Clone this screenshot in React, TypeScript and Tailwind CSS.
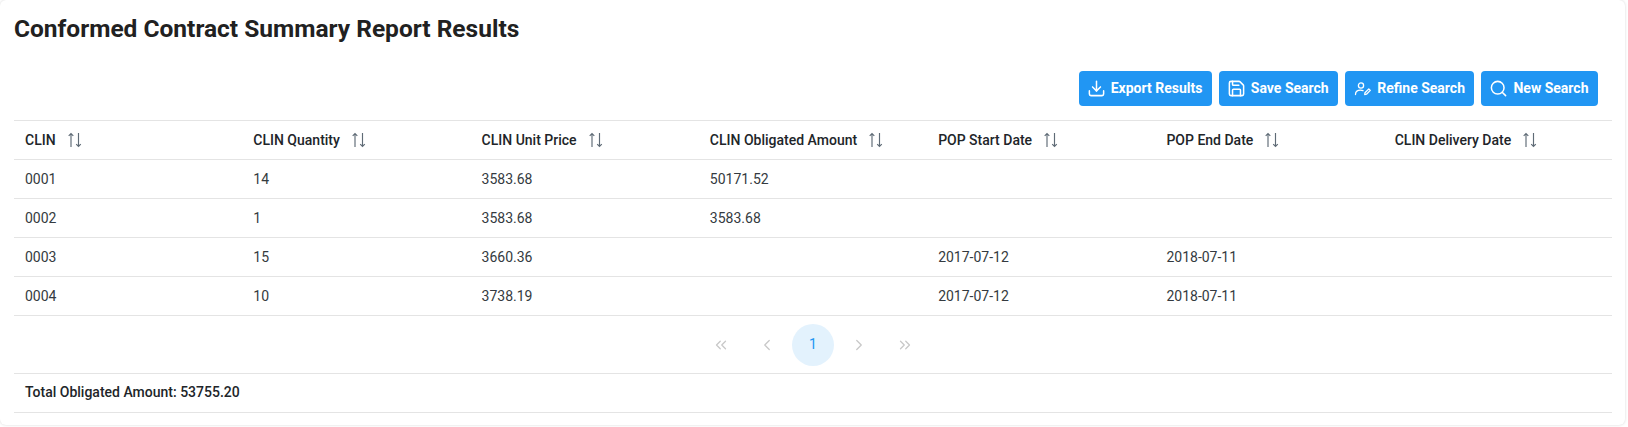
import React from "react";
import { Download, Save, Search, ChevronLeft, ChevronRight, ChevronsLeft, ChevronsRight } from "lucide-react";

const cols = ["CLIN", "CLIN Quantity", "CLIN Unit Price", "CLIN Obligated Amount", "POP Start Date", "POP End Date", "CLIN Delivery Date"];
const rows = [
  ["0001", "14", "3583.68", "50171.52", "", "", ""],
  ["0002", "1", "3583.68", "3583.68", "", "", ""],
  ["0003", "15", "3660.36", "", "2017-07-12", "2018-07-11", ""],
  ["0004", "10", "3738.19", "", "2017-07-12", "2018-07-11", ""],
];

function SortIcon() {
  return (
    <svg width="16" height="16" viewBox="0 0 16 16" fill="none" stroke="#5f6b76" strokeWidth="1.15" className="ml-[11px] shrink-0">
      <path d="M4 15V1.5M1.700 3.800l2.300-2.300 2.300 2.300" />
      <path d="M11.500 1v13.500M9.200 12.200l2.300 2.300 2.300-2.300" />
    </svg>
  );
}

function RefineIcon() {
  return (
    <svg width="19" height="19" viewBox="0 0 19 19" fill="none" stroke="white" strokeWidth="1.3" strokeLinecap="round" strokeLinejoin="round">
      <circle cx="8" cy="6.500" r="2.600" />
      <path d="M2.500 15.500c0-2.800 2.200-4.300 5-4.300 1 0 1.800.2 2.500.5" />
      <path d="M11.700 15.500l.3-1.800 3.800-3.800 1.500 1.500-3.800 3.800z" />
    </svg>
  );
}

function Btn({ icon, label }: { icon: React.ReactNode; label: string }) {
  return (
    <button className="flex h-[35px] items-center gap-[5px] rounded-[4px] bg-[#2196f3] pl-[8px] pr-[9.5px] text-[14px] font-bold text-white">
      {icon}
      <span>{label}</span>
    </button>
  );
}

const pageBtn = "flex h-[42px] w-[42px] items-center justify-center";

export default function App() {
  return (
    <div className="h-[427px] w-[1628px] overflow-hidden bg-white font-['Roboto',sans-serif] text-[#212529]">
      <div className="h-[425px] w-[1625px] rounded-[6px] bg-white pl-[14px] pr-[13px] shadow-[0_0_3px_rgba(0,0,0,0.16)]">
        <h1 className="pt-[14px] text-[24.5px] font-bold leading-[30px] text-[#212121]">Conformed Contract Summary Report Results</h1>
        <div className="mt-[27px] flex h-[35px] justify-end gap-[7px] pr-[14px]">
          <Btn icon={<Download size={19} strokeWidth={1.9} />} label="Export Results" />
          <Btn icon={<Save size={19} strokeWidth={1.9} />} label="Save Search" />
          <Btn icon={<RefineIcon />} label="Refine Search" />
          <Btn icon={<Search size={19} strokeWidth={1.9} />} label="New Search" />
        </div>
        <table className="mt-[14px] w-full table-fixed border-collapse border-t border-[#e4e4e4] text-[14px]">
          <thead>
            <tr className="h-[39px] border-b border-[#e4e4e4]">
              {cols.map((c) => (
                <th key={c} className="px-[11px] text-left font-medium">
                  <div className="flex items-center">
                    {c}
                    <SortIcon />
                  </div>
                </th>
              ))}
            </tr>
          </thead>
          <tbody>
            {rows.map((r) => (
              <tr key={r[0]} className="h-[39px] border-b border-[#e4e4e4]">
                {r.map((v, i) => (
                  <td key={i} className="px-[11px] text-[#343a40]">{v}</td>
                ))}
              </tr>
            ))}
          </tbody>
        </table>
        <div className="flex h-[58px] items-center justify-center gap-[4px] border-b border-[#e4e4e4] text-[#c8c8c8]">
          <span className={pageBtn}><ChevronsLeft size={18} strokeWidth={1.7} /></span>
          <span className={pageBtn}><ChevronLeft size={18} strokeWidth={1.7} /></span>
          <span className={`${pageBtn} rounded-full bg-[#e3f2fd] text-[14px] text-[#2196f3]`}>1</span>
          <span className={pageBtn}><ChevronRight size={18} strokeWidth={1.7} /></span>
          <span className={pageBtn}><ChevronsRight size={18} strokeWidth={1.7} /></span>
        </div>
        <div className="flex h-[39px] items-center border-b border-[#e4e4e4] px-[11px] pb-[1px] text-[14px] font-medium">Total Obligated Amount: 53755.20</div>
      </div>
    </div>
  );
}
